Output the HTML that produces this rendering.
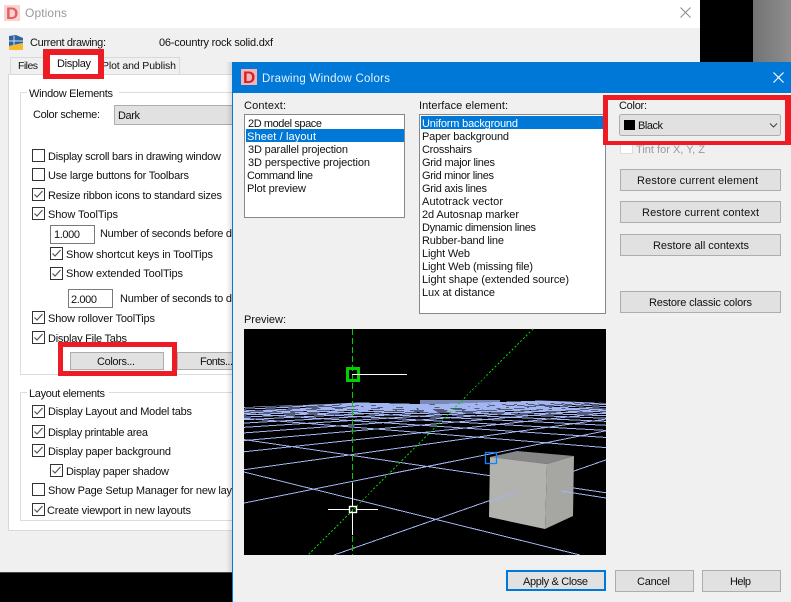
<!DOCTYPE html>
<html><head><meta charset="utf-8"><title>Options</title>
<style>
html,body{margin:0;padding:0;background:#000;overflow:hidden}
svg{display:block;position:absolute;left:0;top:0}
text{font-family:"Liberation Sans",sans-serif;font-size:11px;fill:#111}
</style></head><body>
<svg width="791" height="602" viewBox="0 0 791 602" xmlns="http://www.w3.org/2000/svg">
<defs>
<linearGradient id="gr" x1="0" x2="1" y1="0" y2="0"><stop offset="0" stop-color="#737373"/><stop offset="1" stop-color="#8e8e8e"/></linearGradient>
<linearGradient id="sh" x1="0" x2="1" y1="0" y2="0"><stop offset="0" stop-color="#000" stop-opacity="0"/><stop offset="1" stop-color="#000" stop-opacity=".12"/></linearGradient>
<clipPath id="pv"><path d="M244 407L330 404L420 399L500 399L606 403V555H244Z"/></clipPath>
<g id="cb"><rect x=".5" y=".5" width="12" height="12" fill="#fff" stroke="#333"/></g>
<g id="cc"><rect x=".5" y=".5" width="12" height="12" fill="#fff" stroke="#333"/><path d="M2.5 6.5L5 9L10.5 3" fill="none" stroke="#555" stroke-width="1.2"/></g>
</defs>

<!-- backdrop -->
<rect width="791" height="602" fill="#000"/>
<rect x="753" y="0" width="38" height="62" fill="url(#gr)"/>

<!-- Options window -->
<rect x="0" y="0" width="700" height="28" fill="#fff"/>
<rect x="0" y="28" width="700" height="544" fill="#f0f0f0"/>
<rect x="0" y="572" width="232" height="1" fill="#444"/>
<rect x="4" y="5" width="16" height="16" fill="#f7d3d3"/>
<text x="6" y="19" style="font-size:17px;font-weight:bold;fill:#e2605f">D</text>
<text x="25" y="17" textLength="42" style="font-size:12px;fill:#9a9a9a">Options</text>
<path d="M680.5 7.5L690.5 17.5M690.5 7.5L680.5 17.5" stroke="#8a8a8a" fill="none"/>

<polygon points="9,36 16,35 23,38 23,43 9,46" fill="#2f639e"/>
<polygon points="9,46 23,43 23,50 9,50" fill="#f6b92f"/>
<path d="M9 41H23M14 36V45" stroke="#cfe0f0"/>
<text x="30" y="46" textLength="76">Current drawing:</text>
<text x="159" y="46" textLength="114">06-country rock solid.dxf</text>

<!-- tabs and panel -->
<rect x="10.5" y="57.5" width="35" height="18" fill="#f0f0f0" stroke="#d9d9d9"/>
<rect x="98.5" y="57.5" width="81" height="18" fill="#f0f0f0" stroke="#d9d9d9"/>
<rect x="8.5" y="74.5" width="240" height="456" fill="#fff" stroke="#d9d9d9"/>
<rect x="50" y="55" width="48" height="20" fill="#fff"/>
<text x="18" y="69" textLength="20" style="font-size:10.5px">Files</text>
<text x="102" y="69" textLength="74" style="font-size:10.5px">Plot and Publish</text>
<text x="57" y="67" textLength="34">Display</text>

<!-- Window elements -->
<rect x="20.5" y="92.5" width="230" height="282" fill="none" stroke="#dcdcdc"/>
<rect x="27" y="88" width="92" height="12" fill="#fff"/>
<text x="29" y="97" textLength="84">Window Elements</text>
<text x="33" y="118" textLength="67">Color scheme:</text>
<rect x="114.5" y="105.5" width="130" height="19" fill="#e1e1e1" stroke="#adadad"/>
<text x="118" y="119" textLength="22">Dark</text>

<use href="#cb" x="32" y="149"/><text x="48" y="160" textLength="173">Display scroll bars in drawing window</text>
<use href="#cb" x="32" y="168"/><text x="48" y="179" textLength="141">Use large buttons for Toolbars</text>
<use href="#cc" x="32" y="188"/><text x="48" y="199" textLength="174">Resize ribbon icons to standard sizes</text>
<use href="#cc" x="32" y="207"/><text x="48" y="218" textLength="70">Show ToolTips</text>
<rect x="50.5" y="225.5" width="44" height="18" fill="#fff" stroke="#7a7a7a"/>
<text x="54" y="238" textLength="26">1.000</text>
<text x="100" y="237" textLength="132">Number of seconds before d</text>
<use href="#cc" x="50" y="247"/><text x="66" y="258" textLength="147">Show shortcut keys in ToolTips</text>
<use href="#cc" x="50" y="267"/><text x="66" y="277" textLength="117">Show extended ToolTips</text>
<rect x="68.5" y="289.5" width="44" height="18" fill="#fff" stroke="#7a7a7a"/>
<text x="71" y="303" textLength="26">2.000</text>
<text x="120" y="302" textLength="112">Number of seconds to d</text>
<use href="#cc" x="32" y="311"/><text x="48" y="322" textLength="107">Show rollover ToolTips</text>
<use href="#cc" x="32" y="331"/><text x="48" y="342" textLength="79">Display File Tabs</text>
<rect x="70.5" y="352.5" width="93" height="17" fill="#e1e1e1" stroke="#adadad"/>
<text x="97" y="365" textLength="38">Colors...</text>
<rect x="177.5" y="352.5" width="70" height="17" fill="#e1e1e1" stroke="#adadad"/>
<text x="200" y="365" textLength="33">Fonts...</text>

<!-- Layout elements -->
<rect x="20.5" y="392.5" width="230" height="128" fill="none" stroke="#dcdcdc"/>
<rect x="27" y="388" width="82" height="12" fill="#fff"/>
<text x="29" y="397" textLength="76">Layout elements</text>
<use href="#cc" x="32" y="405"/><text x="48" y="415" textLength="144">Display Layout and Model tabs</text>
<use href="#cc" x="32" y="425"/><text x="48" y="436" textLength="100">Display printable area</text>
<use href="#cc" x="32" y="444"/><text x="48" y="455" textLength="123">Display paper background</text>
<use href="#cc" x="50" y="464"/><text x="66" y="475" textLength="103">Display paper shadow</text>
<use href="#cb" x="32" y="483"/><text x="48" y="494" textLength="184">Show Page Setup Manager for new lay</text>
<use href="#cc" x="32" y="503"/><text x="47" y="514" textLength="144">Create viewport in new layouts</text>

<!-- red highlights left -->
<path fill="#ed1c24" fill-rule="evenodd" d="M43 49H104V79H43ZM50 55V74H98V55Z"/>
<path fill="#ed1c24" fill-rule="evenodd" d="M58 342H177V376H58ZM63 347V371H172V347Z"/>

<!-- Dialog -->
<rect x="226" y="62" width="6" height="510" fill="url(#sh)"/>
<rect x="232" y="62" width="559" height="540" fill="#f0f0f0"/>
<rect x="232" y="62" width="559" height="31" fill="#0078d7"/>
<rect x="232" y="62" width="1" height="540" fill="#0078d7"/>
<rect x="241" y="69" width="16" height="16" fill="#f2b4b4"/>
<text x="243" y="83" style="font-size:17px;font-weight:bold;fill:#d3222a">D</text>
<text x="262" y="82" textLength="128" style="font-size:11.5px;fill:#e6f2fb">Drawing Window Colors</text>
<path d="M773.5 72.5L783.5 82.5M783.5 72.5L773.5 82.5" stroke="#fff" stroke-width="1.2" fill="none"/>

<text x="244" y="109" textLength="42">Context:</text>
<rect x="244.5" y="114.5" width="160" height="103" fill="#fff" stroke="#828790"/>
<rect x="246" y="129" width="158" height="13" fill="#0078d7"/>
<text x="248" y="127" textLength="74">2D model space</text>
<text x="247" y="140" textLength="69" style="fill:#fff">Sheet / layout</text>
<text x="248" y="153" textLength="100">3D parallel projection</text>
<text x="248" y="166" textLength="122">3D perspective projection</text>
<text x="247" y="179" textLength="66">Command line</text>
<text x="247" y="192" textLength="59">Plot preview</text>

<text x="419" y="109" textLength="89">Interface element:</text>
<rect x="419.5" y="114.5" width="186" height="199" fill="#fff" stroke="#828790"/>
<rect x="421" y="116" width="184" height="13" fill="#0078d7"/>
<text x="422" y="127" textLength="96" style="fill:#fff">Uniform background</text>
<text x="422" y="140" textLength="87">Paper background</text>
<text x="422" y="153" textLength="50">Crosshairs</text>
<text x="422" y="166" textLength="73">Grid major lines</text>
<text x="422" y="179" textLength="72">Grid minor lines</text>
<text x="422" y="192" textLength="65">Grid axis lines</text>
<text x="422" y="205" textLength="81">Autotrack vector</text>
<text x="422" y="218" textLength="97">2d Autosnap marker</text>
<text x="422" y="231" textLength="114">Dynamic dimension lines</text>
<text x="422" y="244" textLength="82">Rubber-band line</text>
<text x="422" y="257" textLength="48">Light Web</text>
<text x="422" y="270" textLength="111">Light Web (missing file)</text>
<text x="422" y="283" textLength="147">Light shape (extended source)</text>
<text x="422" y="296" textLength="73">Lux at distance</text>

<text x="619" y="109" textLength="28">Color:</text>
<rect x="619.5" y="114.5" width="161" height="21" rx="2" fill="#e1e1e1" stroke="#adadad"/>
<rect x="624" y="120" width="11" height="10" fill="#000"/>
<text x="638" y="129" textLength="25">Black</text>
<path d="M770 123.5L773.5 127L777 123.5" fill="none" stroke="#444" stroke-width="1.1"/>

<rect x="620.5" y="141.5" width="12" height="12" fill="#fff" stroke="#dcdcdc"/>
<text x="636" y="153" textLength="69" style="fill:#9a9a9a">Tint for X, Y, Z</text>

<!-- red highlight right -->
<path fill="#ed1c24" fill-rule="evenodd" d="M603 95H791V145H603ZM608 100V141H785V100Z"/>

<g fill="#e1e1e1" stroke="#adadad">
<rect x="620.5" y="169.5" width="160" height="21"/>
<rect x="620.5" y="201.5" width="160" height="21"/>
<rect x="620.5" y="234.5" width="160" height="21"/>
<rect x="620.5" y="291.5" width="160" height="21"/>
<rect x="615.5" y="570.5" width="78" height="21"/>
<rect x="702.5" y="570.5" width="78" height="21"/>
</g>
<rect x="507" y="571" width="98" height="19" fill="#e1e1e1" stroke="#0078d7" stroke-width="2"/>
<text x="637" y="184" textLength="121">Restore current element</text>
<text x="642" y="216" textLength="117">Restore current context</text>
<text x="653" y="249" textLength="96">Restore all contexts</text>
<text x="649" y="306" textLength="103">Restore classic colors</text>
<text x="523" y="585" textLength="65">Apply &amp; Close</text>
<text x="637" y="585" textLength="33">Cancel</text>
<text x="730" y="585" textLength="21">Help</text>

<!-- Preview -->
<text x="244" y="323" textLength="42">Preview:</text>
<rect x="244" y="329" width="362" height="226" fill="#000"/>
<g clip-path="url(#pv)" stroke="#a3b6f2" stroke-width="1" shape-rendering="crispEdges">
<g>
<line x1="800" y1="392" x2="334" y2="555"/><line x1="800" y1="392" x2="-16" y2="555"/><line x1="800" y1="392" x2="-366" y2="555"/><line x1="800" y1="392" x2="-716" y2="555"/><line x1="800" y1="392" x2="-1066" y2="555"/><line x1="800" y1="392" x2="-1416" y2="555"/><line x1="800" y1="392" x2="-1766" y2="555"/><line x1="800" y1="392" x2="-2116" y2="555"/><line x1="800" y1="392" x2="-2466" y2="555"/><line x1="800" y1="392" x2="-2816" y2="555"/><line x1="800" y1="392" x2="-3166" y2="555"/><line x1="800" y1="392" x2="-3516" y2="555"/><line x1="800" y1="392" x2="-3866" y2="555"/>
</g>
<g>
<line x1="-80" y1="392" x2="580" y2="555"/><line x1="-80" y1="392" x2="1030" y2="555"/><line x1="-80" y1="392" x2="1930" y2="555"/><line x1="-80" y1="392" x2="2380" y2="555"/><line x1="-80" y1="392" x2="2830" y2="555"/><line x1="-80" y1="392" x2="3280" y2="555"/><line x1="-80" y1="392" x2="3730" y2="555"/><line x1="-80" y1="392" x2="4180" y2="555"/><line x1="-80" y1="392" x2="4630" y2="555"/><line x1="-80" y1="392" x2="5080" y2="555"/><line x1="-80" y1="392" x2="5530" y2="555"/><line x1="-80" y1="392" x2="5980" y2="555"/><line x1="-80" y1="392" x2="6430" y2="555"/>
</g>
</g>
<rect x="420" y="400" width="80" height="4" fill="#a3b6f2" opacity=".75"/>
<!-- green axes -->
<line x1="352.5" y1="329" x2="352.5" y2="555" stroke="#00d000" stroke-dasharray="6 3" shape-rendering="crispEdges"/>
<line x1="533" y1="329" x2="308" y2="555" stroke="#00d000" stroke-dasharray="2 2" shape-rendering="crispEdges"/>
<!-- UCS marker -->
<rect x="347.5" y="368.5" width="11" height="12" fill="none" stroke="#00d000" stroke-width="3"/>
<line x1="352" y1="374.5" x2="407" y2="374.5" stroke="#fff" shape-rendering="crispEdges"/>
<!-- crosshair -->
<path d="M328 509.5H349M357 509.5H378M352.5 483V506M352.5 513V535" stroke="#fff" fill="none" shape-rendering="crispEdges"/>
<rect x="349.5" y="506.5" width="7" height="6" fill="none" stroke="#fff" stroke-width="1.4"/>
<!-- cube -->
<polygon points="490,457 517,451 574,456 547,464" fill="#868686"/>
<polygon points="490,457 547,464 545,529 489,517" fill="#b2b3ae"/>
<polygon points="547,464 574,456 573,516 545,529" fill="#a6a7a2"/>
<line x1="489" y1="502" x2="517" y2="492" stroke="#a3b6f2" shape-rendering="crispEdges"/>
<line x1="561" y1="491" x2="606" y2="498" stroke="#a3b6f2" shape-rendering="crispEdges"/>
<rect x="485.5" y="452.5" width="11" height="11" fill="none" stroke="#0a84ff" stroke-width="1.3"/>
</svg>
</body></html>
